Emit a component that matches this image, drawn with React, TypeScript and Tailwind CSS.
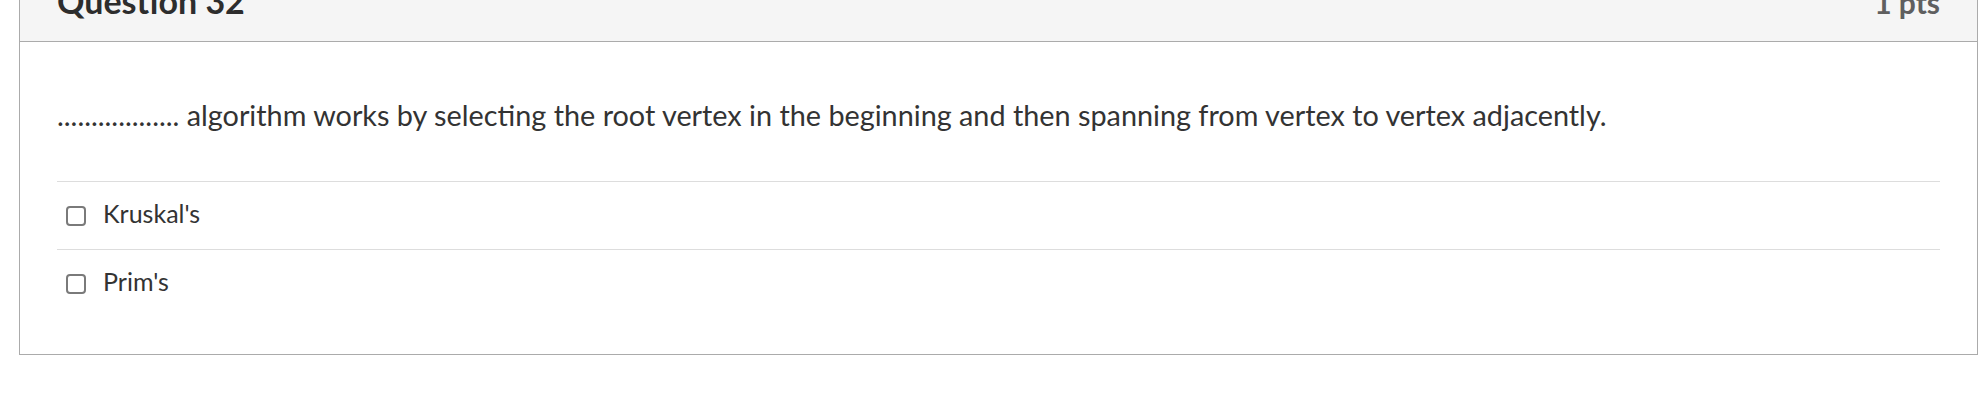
import React from "react";

const options = ["Kruskal's", "Prim's"];

function Checkbox() {
	return <div className="w-[20px] h-[20px] shrink-0 rounded-[4px] border-2 border-[#7a7a7a] bg-white" />;
}

export default function App() {
	return (
		<div className="w-[1988px] h-[416px] overflow-hidden bg-white pl-[19px] pr-[10px]" style={{ fontFamily: "Lato, 'Noto Sans', sans-serif" }}>
			<div className="mt-[-30px] border border-[#ababab] bg-white">
				{/* header */}
				<div className="flex items-end justify-between bg-[#f5f5f5] border-b border-[#ababab] h-[71px] px-[37px] pb-[20px]">
					<div className="text-[34px] font-bold leading-[40px] text-[#2d2d2d]">Question 32</div>
					<div className="text-[30px] font-bold leading-[38px] text-[#5f5f5f]">1 pts</div>
				</div>

				{/* body */}
				<div className="px-[37px] pt-[53px] pb-[37px]">
					<p className="text-[28.8px] leading-[40px] text-[#333333] mb-[46px]">
						.................. algorithm works by selecting the root vertex in the beginning and then spanning from vertex to vertex adjacently.
					</p>
					<div className="flex flex-col">
						{options.map((opt) => (
							<div key={opt} className="flex items-center h-[68px] border-t border-[#dddddd] pl-[9px] gap-[17px]">
								<Checkbox />
								<span className="text-[25px] leading-[30px] pb-[5px] text-[#333333]">{opt}</span>
							</div>
						))}
					</div>
				</div>
			</div>
		</div>
	);
}
